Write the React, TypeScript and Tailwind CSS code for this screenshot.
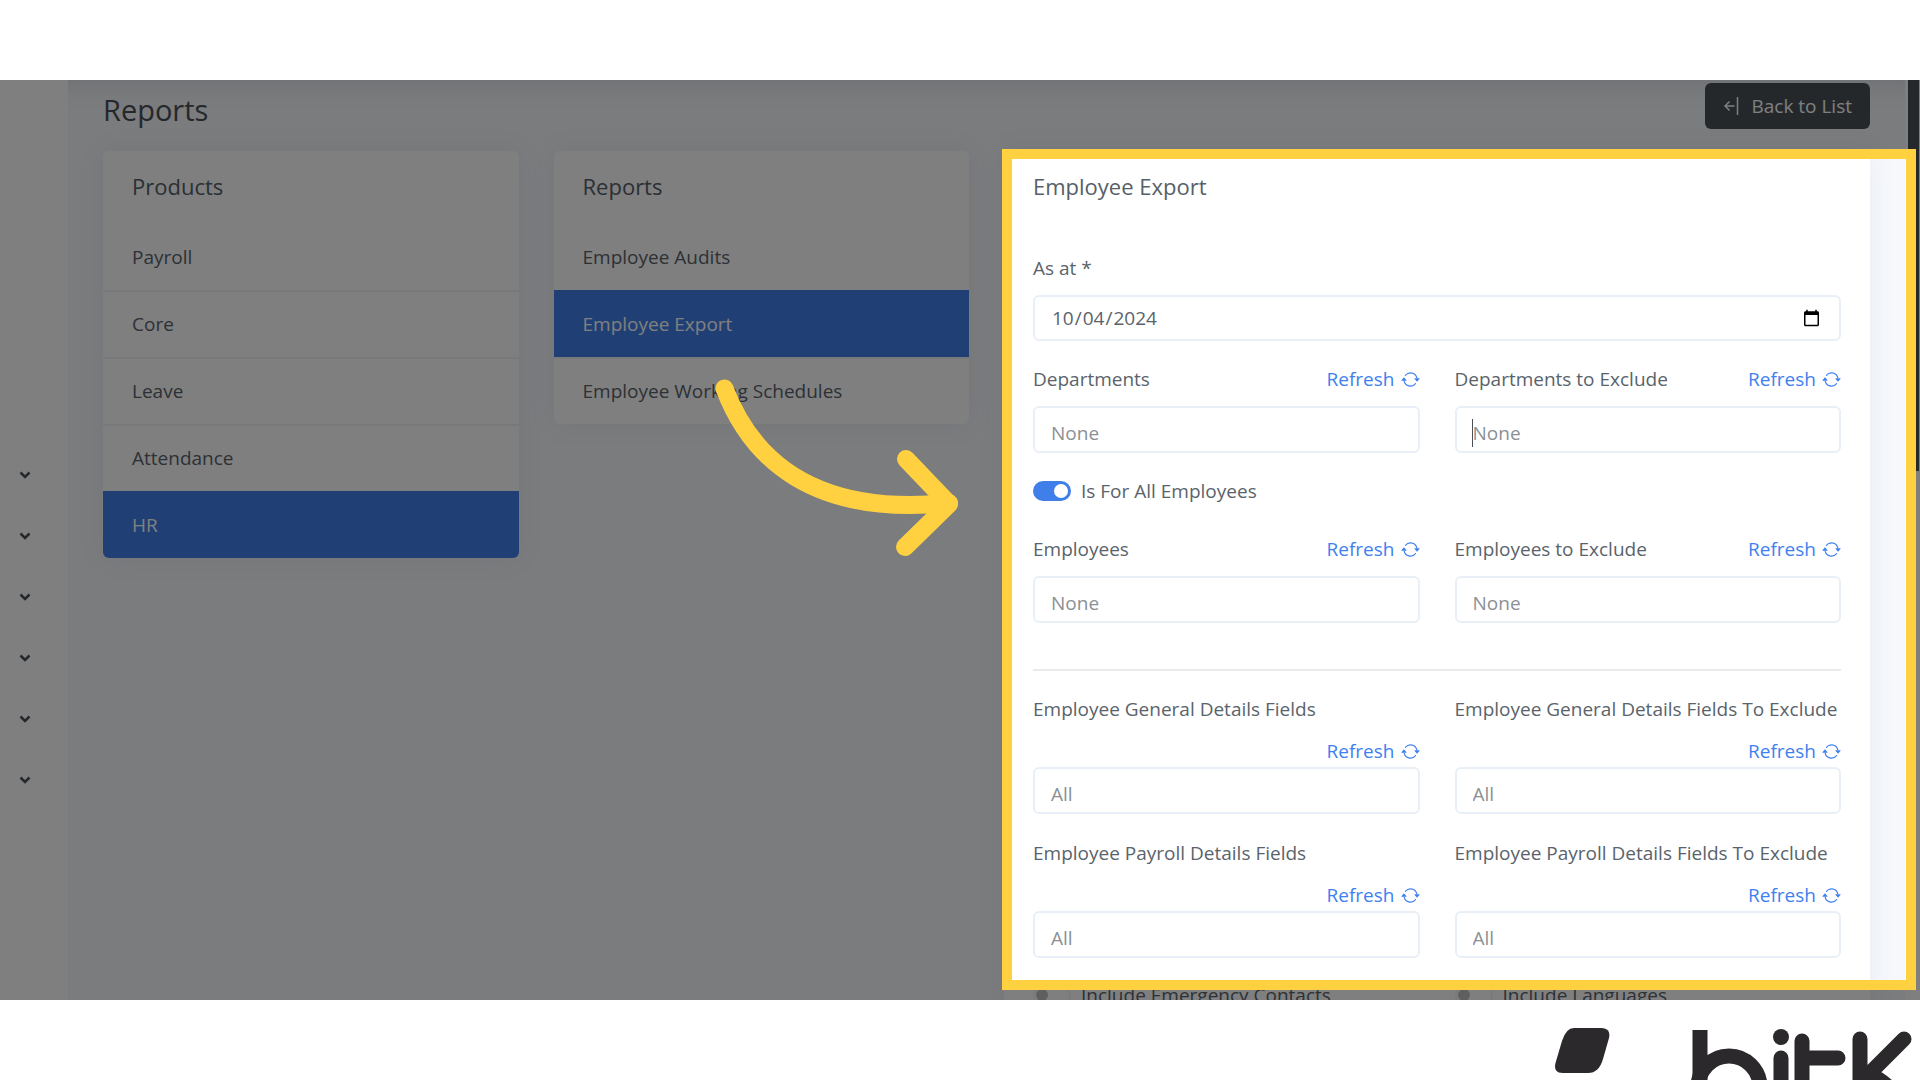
import { useState } from "react";
import { BsArrowRepeat } from "react-icons/bs";

const products = ["Payroll", "Core", "Leave", "Attendance", "HR"];
const reports = [
  "Employee Audits",
  "Employee Export",
  "Employee Working Schedules",
];

function MenuCard({
  title,
  items,
  initial,
}: {
  title: string;
  items: string[];
  initial: string;
}) {
  const [active, setActive] = useState(initial);

  return (
    <div className="self-start overflow-hidden rounded-md bg-white shadow-[0_0_28px_rgba(82,85,120,0.08)]">
      <h2 className="flex h-[72px] items-start px-[29px] pt-[19px] text-[22px] leading-8 text-[#566069]">
        {title}
      </h2>
      <ul>
        {items.map((item) => (
          <li
            key={item}
            className="border-t-2 border-[#eff2f4] first:border-transparent"
          >
            <button
              type="button"
              onClick={() => setActive(item)}
              className={
                item === active
                  ? "-mt-0.5 h-[67px] w-full bg-[#407eea] px-[29px] text-left text-white"
                  : "-mt-0.5 h-[67px] w-full px-[29px] text-left"
              }
            >
              {item}
            </button>
          </li>
        ))}
      </ul>
    </div>
  );
}

function Refresh() {
  return (
    <a href="#refresh" className="flex items-center gap-1.5 text-[#3f80f0]">
      Refresh
      <BsArrowRepeat size={19} aria-hidden="true" />
    </a>
  );
}

function PickField({
  id,
  label,
  placeholder,
  stacked = false,
  caret = false,
}: {
  id: string;
  label: string;
  placeholder: string;
  stacked?: boolean;
  caret?: boolean;
}) {
  return (
    <div>
      <div
        className={
          stacked
            ? "mb-px flex flex-col gap-3"
            : "mb-3 flex items-center justify-between"
        }
      >
        <label htmlFor={id} className="whitespace-nowrap">
          {label}
        </label>
        <div className="flex justify-end">
          <Refresh />
        </div>
      </div>
      <div className="relative">
        <input
          id={id}
          type="text"
          placeholder={placeholder}
          className="block h-[47px] w-full rounded-md border-2 border-[#e9eff6] bg-white px-4 pt-1.5 outline-none placeholder:text-[#8b9095]"
        />
        {caret && (
          <span className="absolute top-[13px] left-[17px] h-7 w-px bg-[#495057]" />
        )}
      </div>
    </div>
  );
}

function Toggle({ label, on = false }: { label: string; on?: boolean }) {
  const [checked, setChecked] = useState(on);

  return (
    <label className="flex items-center gap-2.5">
      <input
        type="checkbox"
        role="switch"
        checked={checked}
        onChange={() => setChecked(!checked)}
        className="flex h-5 w-[38px] appearance-none items-center rounded-full border-2 border-[#f2f5f9] bg-white px-px before:size-3 before:rounded-full before:bg-[#bfbfbf] checked:justify-end checked:border-[#407eea] checked:bg-[#407eea] checked:before:size-[14px] checked:before:bg-white"
      />
      {label}
    </label>
  );
}

export default function App() {
  return (
    <div className="flex h-screen flex-col bg-white font-['Open_Sans',sans-serif] text-[19px] leading-[30px] text-[#5a636b]">
      <header className="h-20 shrink-0" />

      <div className="relative flex min-h-0 flex-1 overflow-hidden">
        {/* Collapsed sidebar */}
        <nav className="flex w-[68px] shrink-0 flex-col gap-10 bg-white pt-[384px]">
          {[0, 1, 2, 3, 4, 5].map((n) => (
            <button
              key={n}
              type="button"
              aria-label="Expand menu"
              className="ml-[15px] flex h-[21px] w-5 shrink-0 items-center justify-center text-[#495057]"
            >
              <svg width="12" height="8" viewBox="0 0 12 8" fill="none">
                <path
                  d="M1.500 1.500L6 6L10.500 1.500"
                  stroke="currentColor"
                  strokeWidth="2.500"
                />
              </svg>
            </button>
          ))}
        </nav>

        <main className="min-w-0 flex-1 bg-[#f6f8fc] pr-[35px] pl-[35px] shadow-[inset_0_30px_30px_-30px_rgba(82,85,100,0.2)]">
          <div className="flex h-[71px] items-start justify-between pt-[3px]">
            <h1 className="pt-[9px] text-[29px] leading-9 text-[#495057]">
              Reports
            </h1>
            <button
              type="button"
              className="flex h-[46px] items-center gap-3 rounded-md bg-[#495057] pr-[18px] pl-[19px] text-white"
            >
              <svg
                width="15"
                height="18"
                viewBox="0 0 15 18"
                fill="none"
                stroke="currentColor"
                strokeWidth="1.500"
                aria-hidden="true"
              >
                <path d="M13.500 0V18M10.500 9H1.500M5.500 4.500L1 9L5.500 13.500" />
              </svg>
              Back to List
            </button>
          </div>

          <div className="grid grid-cols-4 gap-[35px]">
            <MenuCard title="Products" items={products} initial="HR" />
            <MenuCard
              title="Reports"
              items={reports}
              initial="Employee Export"
            />

            <form className="col-span-2 rounded-md bg-white shadow-[0_0_28px_rgba(82,85,120,0.08)]">
              <div className="relative px-[29px] pt-[19px] pb-[30px]">
                <h2 className="text-[22px] leading-8 text-[#566069]">
                  Employee Export
                </h2>

                <div className="mt-[51px] flex flex-col gap-3">
                  <label htmlFor="as-at">As at *</label>
                  <input
                    id="as-at"
                    type="date"
                    defaultValue="2024-10-04"
                    className="h-[46px] rounded-md border-2 border-[#e9eff6] bg-white px-4"
                  />
                </div>

                <div className="mt-[23px] grid grid-cols-2 gap-[35px]">
                  <PickField
                    id="departments"
                    label="Departments"
                    placeholder="None"
                  />
                  <PickField
                    id="departments-exclude"
                    label="Departments to Exclude"
                    placeholder="None"
                    caret
                  />
                </div>

                <div className="mt-[23px]">
                  <Toggle label="Is For All Employees" on />
                </div>

                <div className="mt-7 grid grid-cols-2 gap-[35px]">
                  <PickField
                    id="employees"
                    label="Employees"
                    placeholder="None"
                  />
                  <PickField
                    id="employees-exclude"
                    label="Employees to Exclude"
                    placeholder="None"
                  />
                </div>

                <hr className="mt-[46px] border-t-2 border-[#e8eaeb]" />

                <div className="mt-[23px] grid grid-cols-2 gap-x-[35px] gap-y-6">
                  <PickField
                    id="general"
                    label="Employee General Details Fields"
                    placeholder="All"
                    stacked
                  />
                  <PickField
                    id="general-exclude"
                    label="Employee General Details Fields To Exclude"
                    placeholder="All"
                    stacked
                  />
                  <PickField
                    id="payroll"
                    label="Employee Payroll Details Fields"
                    placeholder="All"
                    stacked
                  />
                  <PickField
                    id="payroll-exclude"
                    label="Employee Payroll Details Fields To Exclude"
                    placeholder="All"
                    stacked
                  />
                </div>

                {/* Spotlight frame, dims everything around it */}
                <div className="pointer-events-none absolute -top-0.5 -right-[46px] -bottom-0.5 -left-0.5 z-10 border-10 border-[#ffd140] shadow-[0_0_0_2000px_rgba(0,0,0,0.5)]" />
              </div>

              <div className="-mt-2 grid grid-cols-2 gap-[35px] px-[29px] pb-6">
                <Toggle label="Include Emergency Contacts" />
                <Toggle label="Include Languages" />
              </div>
            </form>
          </div>
        </main>

        {/* Page scroll track */}
        <div className="w-[15px] shrink-0 bg-white pr-px pl-[3px]">
          <div className="h-[391px] bg-[#495057]" />
        </div>

        {/* Arrow from the menu to the form */}
        <svg
          className="pointer-events-none absolute top-[290px] left-[710px] z-20 h-[200px] w-[260px]"
          viewBox="0 0 260 200"
          fill="none"
          stroke="#ffd140"
          strokeWidth="18"
          strokeLinecap="round"
          strokeLinejoin="round"
          aria-hidden="true"
        >
          <path d="M14.500 18.500C41 88 102 147 239 133" />
          <path d="M196 89L239 134L195 177" />
        </svg>
      </div>

      <footer className="flex h-20 shrink-0 justify-end overflow-hidden">
        <svg
          className="h-20 w-[370px]"
          viewBox="0 0 370 80"
          role="img"
          aria-label="bitK logo"
        >
          <path
            d="M24 28H51Q61 28 59 38L53 59Q49 73 38 73H13Q3 73 5.500 63L12 41Q16 28 24 28Z"
            fill="#2b292b"
          />
          <g fill="none" stroke="#2b292b" strokeWidth="15">
            <path d="M150 30V100" />
            <circle cx="179" cy="87" r="31" />
            <path
              d="M231 58V100M252 41V100M252 58H288M310 39V100M354 39L316 77M322 76Q334 80 346 96"
              strokeLinecap="round"
            />
          </g>
          <circle cx="231" cy="37" r="8" fill="#2b292b" />
        </svg>
      </footer>
    </div>
  );
}
